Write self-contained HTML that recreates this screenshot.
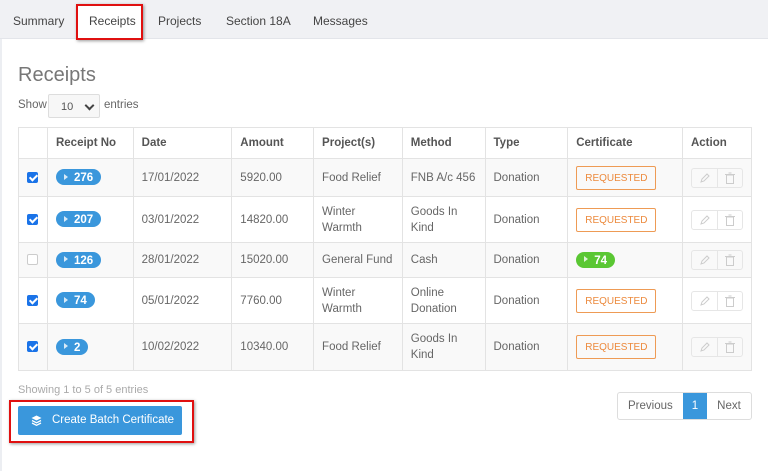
<!DOCTYPE html>
<html><head><style>
*{box-sizing:border-box;margin:0;padding:0}
body{width:768px;height:471px;overflow:hidden;background:#fff;font-family:"Liberation Sans",sans-serif;font-size:11.5px;color:#666;position:relative}
.nav{position:absolute;left:0;top:0;width:768px;height:39px;background:#f0f1f4;border-bottom:1px solid #e3e5ea}
.nav span{position:absolute;top:14px;font-size:12px;color:#444}
.tabact{position:absolute;left:76px;top:4px;width:67px;height:36px;background:#fff;border:2px solid #e01010;box-shadow:1px 1px 3px rgba(0,0,0,.4)}
.lstrip{position:absolute;left:0;top:39px;width:2px;height:432px;background:#eceef2}
h1{position:absolute;left:18px;top:64px;font-size:20px;font-weight:normal;color:#777}
.show{position:absolute;left:18px;top:99px;color:#666}
.sel{position:absolute;left:48px;top:94px;width:52px;height:24px;border:1px solid #ddd;background:#f7f7f7;border-radius:2px;font-size:11px;padding:6px 0 0 12px;color:#555}
.sel:after{content:"";position:absolute;right:6px;top:7px;width:5px;height:5px;border-right:2px solid #444;border-bottom:2px solid #444;transform:rotate(45deg)}
.ent{position:absolute;left:104px;top:99px;color:#666}
table{position:absolute;left:18px;top:127px;width:734px;border-collapse:collapse}
td,th{border:1px solid #e3e3e3;text-align:left;padding:0 8px;vertical-align:middle;line-height:16px}
th{height:31px;font-weight:bold;color:#555;font-size:11.5px}
tr.g td{background:#f9f9f9}
.bd{display:inline-block;position:relative;background:#3a97dc;color:#fff;font-weight:bold;border-radius:9px;height:16px;padding:2px 8px 0 18px;font-size:11.5px;vertical-align:middle;line-height:14px}
.bd:before{content:"";position:absolute;left:8px;top:4.5px;border-left:4px solid #fff;border-top:3.5px solid transparent;border-bottom:3.5px solid transparent;opacity:.8}
.gr{background:#5ac733}
.req{display:inline-block;border:1px solid #ee9b55;color:#ec8a3d;border-radius:2px;height:24px;padding:6px 8px 0;line-height:12px;font-size:10px;vertical-align:middle}
.act{display:inline-block;width:52px;height:20px;border:1px solid #e6e6e6;border-radius:3px;position:relative;vertical-align:middle}
.act:after{content:"";position:absolute;left:25px;top:0;width:1px;height:18px;background:#e6e6e6}
.act svg{position:absolute;top:3px}
.cb{display:inline-block;width:11px;height:11px;border-radius:2px;background:#1a73e8;position:relative;vertical-align:middle}
.cb:after{content:"";position:absolute;left:3.5px;top:1px;width:3px;height:6px;border-right:2px solid #fff;border-bottom:2px solid #fff;transform:rotate(45deg)}
.cbe{display:inline-block;width:11px;height:11px;border-radius:2px;border:1px solid #ccc;background:#fff;vertical-align:middle}
.info{position:absolute;left:18px;top:384px;color:#aaa;font-size:11px}
.btnbox{position:absolute;left:9px;top:400px;width:185px;height:43px;border:2px solid #e01010;box-shadow:1px 1px 3px rgba(0,0,0,.4)}
.btn{position:absolute;left:18px;top:406px;width:164px;height:29px;background:#3a97dc;color:#fff;border-radius:2px;font-size:11.5px;line-height:29px;padding-left:34px}
.pg{position:absolute;left:617px;top:392px;height:28px;border:1px solid #ddd;border-radius:3px;display:flex;color:#666;font-size:11.5px}
.pg div{line-height:26px;padding:0 10px}
.pg .a{background:#3a97dc;color:#fff;padding:0 9px}
</style></head><body>
<div class="nav">
<span style="left:13px">Summary</span>
<div class="tabact"></div>
<span style="left:89px">Receipts</span>
<span style="left:158px">Projects</span>
<span style="left:226px">Section 18A</span>
<span style="left:313px">Messages</span>
</div>
<div class="lstrip"></div>
<h1>Receipts</h1>
<div class="show">Show</div><div class="sel">10</div><div class="ent">entries</div>
<table>
<colgroup><col style="width:29px"><col style="width:86px"><col style="width:99px"><col style="width:82px"><col style="width:89px"><col style="width:83px"><col style="width:83px"><col style="width:115px"><col style="width:68px"></colgroup>
<tr><th></th><th>Receipt No</th><th>Date</th><th>Amount</th><th>Project(s)</th><th>Method</th><th>Type</th><th>Certificate</th><th>Action</th></tr>
<tr class="g" style="height:38px"><td><span class="cb"></span></td><td><span class="bd">276</span></td><td>17/01/2022</td><td>5920.00</td><td>Food Relief</td><td>FNB A/c 456</td><td>Donation</td><td><span class="req">REQUESTED</span></td><td><span class="act"><svg style="left:7px" width="11" height="12" viewBox="0 0 11 12"><path d="M2 10 L3 7 L8 2 L10 4 L5 9 Z" fill="none" stroke="#ccc"/></svg><svg style="left:33px" width="10" height="12" viewBox="0 0 10 12"><rect x="1.5" y="3" width="7" height="8.5" fill="none" stroke="#ccc"/><path d="M0 2.5h10M3.5 1h3" stroke="#ccc"/></svg></span></td></tr>
<tr style="height:46px"><td><span class="cb"></span></td><td><span class="bd">207</span></td><td>03/01/2022</td><td>14820.00</td><td>Winter<br>Warmth</td><td>Goods In<br>Kind</td><td>Donation</td><td><span class="req">REQUESTED</span></td><td><span class="act"><svg style="left:7px" width="11" height="12" viewBox="0 0 11 12"><path d="M2 10 L3 7 L8 2 L10 4 L5 9 Z" fill="none" stroke="#ccc"/></svg><svg style="left:33px" width="10" height="12" viewBox="0 0 10 12"><rect x="1.5" y="3" width="7" height="8.5" fill="none" stroke="#ccc"/><path d="M0 2.5h10M3.5 1h3" stroke="#ccc"/></svg></span></td></tr>
<tr class="g" style="height:35px"><td><span class="cbe"></span></td><td><span class="bd">126</span></td><td>28/01/2022</td><td>15020.00</td><td>General Fund</td><td>Cash</td><td>Donation</td><td><span class="bd gr">74</span></td><td><span class="act"><svg style="left:7px" width="11" height="12" viewBox="0 0 11 12"><path d="M2 10 L3 7 L8 2 L10 4 L5 9 Z" fill="none" stroke="#ccc"/></svg><svg style="left:33px" width="10" height="12" viewBox="0 0 10 12"><rect x="1.5" y="3" width="7" height="8.5" fill="none" stroke="#ccc"/><path d="M0 2.5h10M3.5 1h3" stroke="#ccc"/></svg></span></td></tr>
<tr style="height:46px"><td><span class="cb"></span></td><td><span class="bd">74</span></td><td>05/01/2022</td><td>7760.00</td><td>Winter<br>Warmth</td><td>Online<br>Donation</td><td>Donation</td><td><span class="req">REQUESTED</span></td><td><span class="act"><svg style="left:7px" width="11" height="12" viewBox="0 0 11 12"><path d="M2 10 L3 7 L8 2 L10 4 L5 9 Z" fill="none" stroke="#ccc"/></svg><svg style="left:33px" width="10" height="12" viewBox="0 0 10 12"><rect x="1.5" y="3" width="7" height="8.5" fill="none" stroke="#ccc"/><path d="M0 2.5h10M3.5 1h3" stroke="#ccc"/></svg></span></td></tr>
<tr class="g" style="height:47px"><td><span class="cb"></span></td><td><span class="bd">2</span></td><td>10/02/2022</td><td>10340.00</td><td>Food Relief</td><td>Goods In<br>Kind</td><td>Donation</td><td><span class="req">REQUESTED</span></td><td><span class="act"><svg style="left:7px" width="11" height="12" viewBox="0 0 11 12"><path d="M2 10 L3 7 L8 2 L10 4 L5 9 Z" fill="none" stroke="#ccc"/></svg><svg style="left:33px" width="10" height="12" viewBox="0 0 10 12"><rect x="1.5" y="3" width="7" height="8.5" fill="none" stroke="#ccc"/><path d="M0 2.5h10M3.5 1h3" stroke="#ccc"/></svg></span></td></tr>
</table>
<div class="info">Showing 1 to 5 of 5 entries</div>
<div class="btnbox"></div>
<div class="btn"><svg style="position:absolute;left:13px;top:9px" width="11" height="11" viewBox="0 0 11 11"><path d="M5.5 0.5 L10.5 3 L5.5 5.5 L0.5 3 Z" fill="#fff"/><path d="M1 5.5 L5.5 7.8 L10 5.5 M1 8 L5.5 10.3 L10 8" fill="none" stroke="#fff" stroke-width="1.3"/></svg>Create Batch Certificate</div>
<div class="pg"><div>Previous</div><div class="a">1</div><div>Next</div></div>
</body></html>
